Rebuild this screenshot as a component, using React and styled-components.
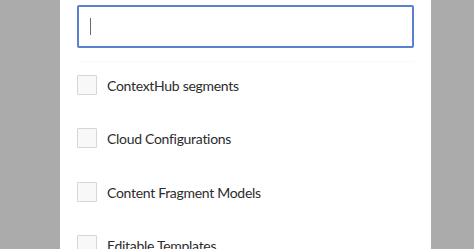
import React from 'react';
import styled, { createGlobalStyle } from 'styled-components';

const GlobalStyle = createGlobalStyle`
  html, body {
    margin: 0;
    padding: 0;
    background: #ababab;
    overflow: hidden;
  }
`;

const Backdrop = styled.div`
  height: 249px;
  padding-left: 60px;
  display: flex;
`;

const Panel = styled.div`
  width: 371px;
  height: 249px;
  background: #ffffff;
  padding: 5px 17px 0 17px;
  box-sizing: border-box;
  font-family: Lato, "Open Sans", sans-serif;
  overflow: hidden;
`;

const SearchBox = styled.div`
  height: 43px;
  border: 2px solid #5a80d0;
  border-radius: 2px;
  box-sizing: border-box;
  display: flex;
  align-items: center;
  padding-left: 11px;
`;

const Caret = styled.span`
  width: 1px;
  height: 17px;
  background: #6a6a6a;
`;

const Divider = styled.div`
  height: 1px;
  background: #f9f9f9;
  margin: 13px 0 13px;
`;

const List = styled.ul`
  list-style: none;
  margin: 0;
  padding: 0;
  display: flex;
  flex-direction: column;
  gap: 33.3px;
`;

const Row = styled.li`
  display: flex;
  align-items: center;
  gap: 10px;
  height: 20px;
`;

const Box = styled.span`
  width: 20px;
  height: 20px;
  box-sizing: border-box;
  border: 1px solid #d6d6d6;
  background: #f8f8f8;
  border-radius: 1px;
  flex-shrink: 0;
`;

const Label = styled.span`
  font-size: 14px;
  letter-spacing: -0.3px;
  color: #2c2c2c;
  line-height: 20px;
  position: relative;
  top: 1px;
  white-space: nowrap;
`;

const items = [
  'ContextHub segments',
  'Cloud Configurations',
  'Content Fragment Models',
  'Editable Templates',
];

export default function App() {
  return (
    <>
      <GlobalStyle />
      <Backdrop>
        <Panel>
          <SearchBox>
            <Caret />
          </SearchBox>
          <Divider />
          <List>
            {items.map(item => (
              <Row key={item}>
                <Box />
                <Label>{item}</Label>
              </Row>
            ))}
          </List>
        </Panel>
      </Backdrop>
    </>
  );
}
